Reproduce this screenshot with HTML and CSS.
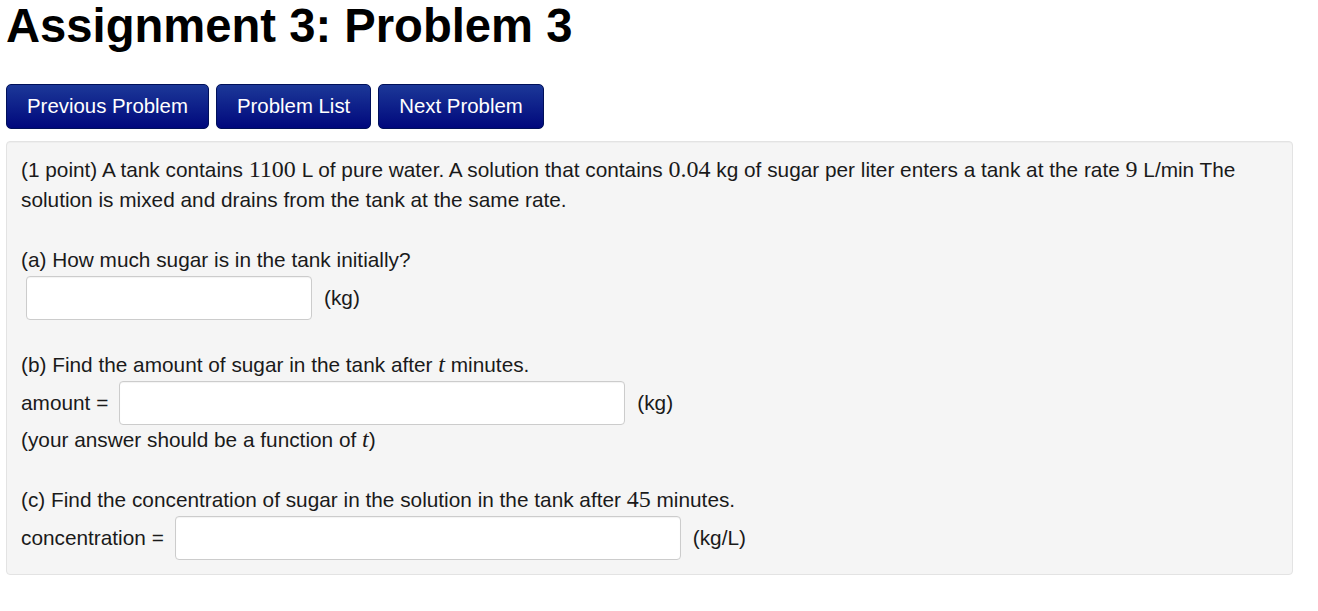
FILE: index.html
```html
<!DOCTYPE html>
<html>
<head>
<meta charset="utf-8">
<link rel="stylesheet" href="styles.css">
</head>
<body>
<div class="page">
  <h1 class="title">Assignment 3: Problem 3</h1>
  <div class="nav">
    <a class="btn">Previous Problem</a>
    <a class="btn">Problem List</a>
    <a class="btn">Next Problem</a>
  </div>
  <div class="problem">
    <div class="text">(1 point) A tank contains <span class="m">1100</span> L of pure water. A solution that contains <span class="m">0.04</span> kg of sugar per liter enters a tank at the rate <span class="m">9</span> L/min The solution is mixed and drains from the tank at the same rate.</div>
    <div class="blank"></div>
    <div class="line">(a) How much sugar is in the tank initially?</div>
    <div class="row first">
      <span class="box short"></span>
      <span class="unit">(kg)</span>
    </div>
    <div class="blank"></div>
    <div class="line">(b) Find the amount of sugar in the tank after <span class="mi">t</span> minutes.</div>
    <div class="row">
      <span class="label">amount =</span>
      <span class="box long"></span>
      <span class="unit">(kg)</span>
    </div>
    <div class="line">(your answer should be a function of <span class="mi">t</span>)</div>
    <div class="blank"></div>
    <div class="line">(c) Find the concentration of sugar in the solution in the tank after <span class="m">45</span> minutes.</div>
    <div class="row">
      <span class="label">concentration =</span>
      <span class="box long"></span>
      <span class="unit">(kg/L)</span>
    </div>
  </div>
</div>
</body>
</html>
```
FILE: styles.css
```css
html, body {
  margin: 0;
  padding: 0;
  background: #ffffff;
}
body {
  font-family: "Liberation Sans", Arial, sans-serif;
  color: #1a1a1a;
}
.page {
  padding: 0 6px;
  width: 1287px;
}
.title {
  margin: 0;
  font-size: 47.2px;
  line-height: 52px;
  font-weight: bold;
  color: #000;
}
.nav {
  margin-top: 32px;
  display: flex;
  gap: 7px;
}
.btn {
  display: block;
  height: 43px;
  line-height: 43px;
  padding: 0 20px;
  font-size: 20.4px;
  color: #fff;
  border: 1px solid #00105a;
  border-radius: 5px;
  background: linear-gradient(#1c3898, #00087c);
}
.problem {
  margin-top: 12px;
  background: #f5f5f5;
  border: 1px solid #e3e3e3;
  border-radius: 4px;
  padding: 13px 14px 14px 14px;
  font-size: 20.8px;
  line-height: 30px;
  box-shadow: inset 0 1px 1px rgba(0,0,0,0.03);
}
.text, .line {
  line-height: 30px;
}
.blank {
  height: 30px;
}
.m, .mi {
  font-family: "Liberation Serif", "Times New Roman", serif;
  font-size: 24px;
  line-height: 1;
}
.mi {
  font-style: italic;
}
.row {
  display: flex;
  align-items: center;
  height: 45px;
}
.row.first {
  padding-left: 5px;
}
.label {
  margin-right: 11px;
}
.box {
  display: block;
  height: 42px;
  background: #fff;
  border: 1px solid #cccccc;
  border-radius: 4px;
  box-shadow: inset 0 1px 1px rgba(0,0,0,0.05);
  margin-right: 12px;
}
.short {
  width: 284px;
}
.long {
  width: 504px;
}
```
